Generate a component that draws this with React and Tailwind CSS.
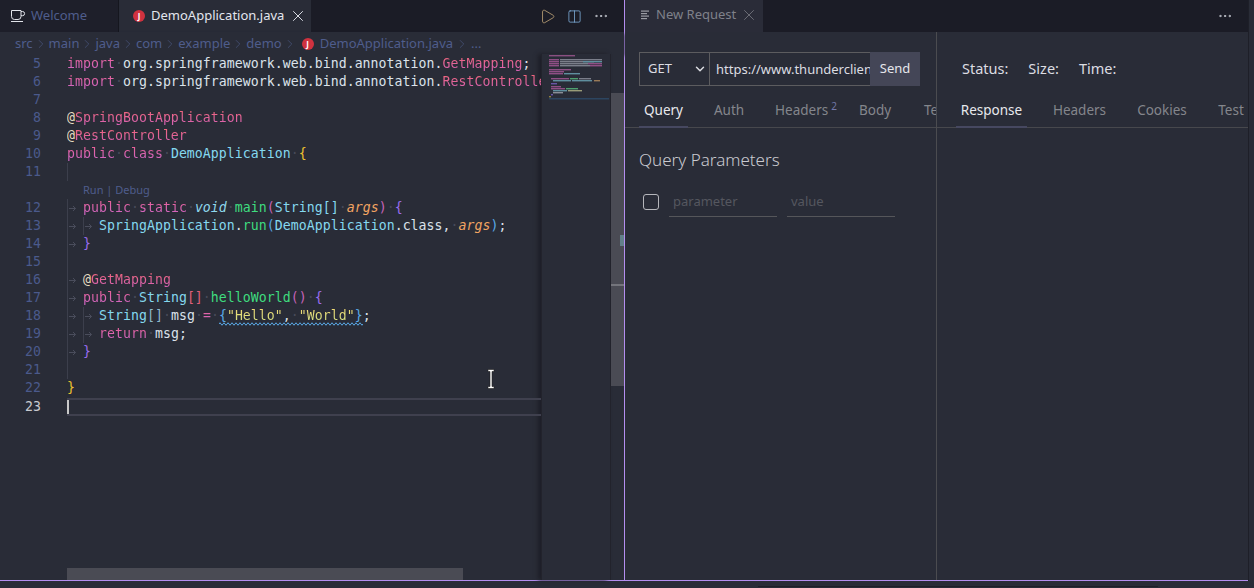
import { ChevronDown, ChevronRight, Columns2, Ellipsis, Play, X } from 'lucide-react';

// Token colours for the editor theme
const kw = 'bg-gradient-to-b from-[#f0608f] to-[#c765d0] bg-clip-text text-transparent';
const deco = 'bg-gradient-to-b from-[#f7656f] to-[#d05fc0] bg-clip-text text-transparent';
const type = 'text-[#84d8ef]';
const plain = 'text-[#dbe2ea]';
const fn = 'text-[#3fdc7f]';
const arg = 'italic text-[#f2a462]';
const voidKw = 'italic text-[#8fd8ee]';
const str = 'bg-gradient-to-b from-[#f5d76e] to-[#c9e58a] bg-clip-text text-transparent';
const gold = 'text-[#eec22f]';
const purple = 'text-[#9a6cf0]';
const pink = 'text-[#c763b8]';
const red = 'text-[#e05f7a]';
const blue = 'text-[#5aa9e6]';
const at = 'text-[#e6dcc0]';
const dot = 'text-[#474a59]';

const sp = ['·', dot];

const lines = [
  { n: 5, t: [['import', kw], sp, ['org.springframework.web.bind.annotation.', plain], ['GetMapping', deco], [';', plain]] },
  { n: 6, t: [['import', kw], sp, ['org.springframework.web.bind.annotation.', plain], ['RestController', deco], [';', plain]] },
  { n: 7, t: [] },
  { n: 8, t: [['@', at], ['SpringBootApplication', deco]] },
  { n: 9, t: [['@', at], ['RestController', deco]] },
  { n: 10, t: [['public', kw], sp, ['class', kw], sp, ['DemoApplication', type], sp, ['{', gold]] },
  { n: 11, guides: 1, t: [] },
  { lens: true },
  { n: 12, guides: 1, arrows: 1, t: [['public', kw], sp, ['static', kw], sp, ['void', voidKw], sp, ['main', fn], ['(', pink], ['String', type], ['[]', type], sp, ['args', arg], [')', pink], sp, ['{', purple]] },
  { n: 13, guides: 2, arrows: 2, t: [['SpringApplication', type], ['.', plain], ['run', fn], ['(', blue], ['DemoApplication', type], ['.class,', plain], sp, ['args', arg], [')', blue], [';', plain]] },
  { n: 14, guides: 1, arrows: 1, t: [['}', purple]] },
  { n: 15, guides: 1, t: [] },
  { n: 16, guides: 1, arrows: 1, t: [['@', at], ['GetMapping', deco]] },
  { n: 17, guides: 1, arrows: 1, t: [['public', kw], sp, ['String', type], ['[]', red], sp, ['helloWorld', fn], ['()', pink], sp, ['{', purple]] },
  { n: 18, guides: 2, arrows: 2, squiggle: true, t: [['String', type], ['[]', 'text-[#8fb8cc]'], sp, ['msg', plain], sp, ['=', kw], sp] },
  { n: 19, guides: 2, arrows: 2, t: [['return', kw], sp, ['msg', plain], [';', plain]] },
  { n: 20, guides: 1, arrows: 1, t: [['}', purple]] },
  { n: 21, guides: 1, t: [] },
  { n: 22, t: [['}', gold]] },
];

// x, y, width, colour of the tiny code marks in the minimap
const minimapMarks = [
  [7, 1, 26, '#8a4f80'],
  [7, 5, 10, '#8f4f85'], [18, 5, 42, '#7b7e8a'], [7, 7, 10, '#8f4f85'], [18, 7, 34, '#7b7e8a'], [41, 7, 19, '#5f8f9f'],
  [7, 9, 10, '#8f4f85'], [18, 9, 28, '#7b7e8a'], [46, 9, 14, '#8f4f85'], [7, 11, 10, '#8f4f85'], [18, 11, 30, '#7b7e8a'], [48, 11, 12, '#8f4f85'],
  [7, 15, 22, '#8f4f85'], [7, 17, 15, '#8f4f85'], [7, 19, 14, '#8f4f85'], [22, 19, 16, '#5f8f9f'],
  [9, 24, 18, '#8f4f85'], [28, 24, 8, '#4f9f6f'], [37, 24, 12, '#7b7e8a'], [11, 26, 18, '#5f8f9f'], [30, 26, 20, '#5f8f9f'], [52, 26, 6, '#9a7a58'],
  [9, 29, 6, '#6a55a8'], [9, 32, 10, '#8f4f85'], [9, 34, 14, '#8f4f85'], [24, 34, 12, '#4f9f6f'],
  [11, 36, 14, '#5f8f9f'], [26, 36, 14, '#9a9c78'], [11, 38, 10, '#8a8d96'], [9, 40, 2, '#6a55a8'], [7, 42, 2, '#8f8040'],
];

const JavaIcon = () => (
  <span className="flex h-3 w-3 shrink-0 items-center justify-center rounded-full bg-[#d0323f] text-[8px] font-bold leading-none text-white">
    J
  </span>
);

const CoffeeIcon = () => (
  <svg width="16" height="16" viewBox="0 0 16 16" fill="none" stroke="#e2e4ea" strokeWidth="1" className="shrink-0">
    <path d="M1.5 2.5h9.5v6a3 3 0 0 1-3 3H4.5a3 3 0 0 1-3-3z" />
    <path d="M11 3.5h1.5a1.6 1.6 0 0 1 0 4.2H11" />
    <path d="M1 13.5h12" />
  </svg>
);

// Rendered-whitespace arrow for a tab character
const TabArrow = () => (
  <svg width="9" height="9" viewBox="0 0 9 9" fill="none" stroke="#4a4d5c" strokeWidth="1" className="shrink-0">
    <path d="M1 4.5h6.5M5 2l2.5 2.5L5 7" />
  </svg>
);

// Wavy problem underline
const Squiggle = () => (
  <svg width="144" height="4" viewBox="0 0 144 4" fill="none" stroke="#5aa9e6" strokeWidth="1" className="absolute left-0 top-[15px]">
    <path d={`M0 2${' q1 -2.5 2 0 t2 0'.repeat(36)}`} />
  </svg>
);

const CodeLine = ({ line }) => {
  if (line.lens) {
    return (
      <div className="flex h-[18px] items-center pl-4 font-['Noto_Sans'] text-[11px] tracking-normal text-[#4f5d8c]">Run | Debug</div>
    );
  }
  const guides = line.guides || 0;
  const arrows = line.arrows || 0;
  return (
    <div className="flex h-[18px] items-center whitespace-pre">
      {Array.from({ length: guides }).map((_, i) => (
        <span key={i} className="flex h-full w-4 shrink-0 items-center border-l border-[#3c3f4c]">
          {i < arrows && <TabArrow />}
        </span>
      ))}
      {line.t.map(([text, cls], i) => (
        <span key={i} className={cls}>{text}</span>
      ))}
      {line.squiggle && (
        <>
          <span className={blue}>{'{'}</span>
          <span className={str}>"Hello"</span>
          <span className={plain}>,</span>
          <span className={dot}>·</span>
          <span className={str}>"World"</span>
          <span className={blue}>{'}'}</span>
          <span className={plain}>;</span>
        </>
      )}
    </div>
  );
};

const EditorPane = () => (
  <section className="flex w-[625px] shrink-0 flex-col border-r border-[#b48ef0]">
    <div className="flex h-8 shrink-0 items-center bg-[#1b1c26] text-[13px]">
      <div className="flex h-full w-[119px] items-center gap-[5px] border-r border-[#15161e] bg-[#1e1f2a] pl-[10px] text-[#4f5d8c]">
        <CoffeeIcon />
        Welcome
      </div>
      <div className="flex h-full w-[192px] items-center bg-[#292c37] pl-[14px] text-[#e3e6ee]">
        <JavaIcon />
        <span className="ml-1.5">DemoApplication.java</span>
        <X size={18} strokeWidth={1.25} className="ml-[5px]" />
      </div>
      <div className="ml-auto flex items-center gap-[11px] pr-[15px]">
        <Play size={17} strokeWidth={1.25} className="text-[#b39a72]" />
        <Columns2 size={15} strokeWidth={1.25} className="text-[#7fb0dc]" />
        <Ellipsis size={16} strokeWidth={1.5} className="text-[#c5c8d0]" />
      </div>
    </div>
    <div className="flex h-[22px] shrink-0 items-center bg-[#292c37] pl-[15px] pt-0.5 text-[13px] text-[#4f5d8c] shadow-[0_2px_3px_#1b1c26]">
      {['src', 'main', 'java', 'com', 'example', 'demo'].map((part) => (
        <span key={part} className="flex items-center">
          {part}
          <ChevronRight size={14} strokeWidth={1} className="mx-px" />
        </span>
      ))}
      <span className="ml-1"><JavaIcon /></span>
      <span className="ml-1.5">DemoApplication.java</span>
      <ChevronRight size={14} strokeWidth={1} className="mx-[2px]" />
      ...
    </div>
    <div className="flex min-h-0 flex-1 bg-[#292c37]">
      <div className="relative flex w-[541px] shrink-0 flex-col overflow-hidden">
        <div className="flex-1 pt-px font-['DejaVu_Sans_Mono'] text-[13.2px] tracking-[0.05px]">
          {lines.map((line, i) => (
            <div key={i} className="flex">
              <span className="h-[18px] w-[41px] shrink-0 text-right leading-[18px] text-[#4b5a8c]">{line.n}</span>
              <span className="ml-[26px] min-w-0 flex-1 overflow-hidden">
                <CodeLine line={line} />
              </span>
            </div>
          ))}
          <div className="mt-px flex">
            <span className="h-[18px] w-[41px] shrink-0 text-right leading-[18px] text-[#c8cad0]">23</span>
            <span className="ml-[26px] h-[18px] flex-1 border-y-2 border-[#3f404e]">
              <span className="block h-full w-0.5 bg-[#c8c8c8]" />
            </span>
          </div>
        </div>
        <div className="ml-[67px] h-3 w-[396px] shrink-0 bg-[#4a4b54]" />
        {/* Problem underline on line 18, sits over the code */}
        <div className="absolute left-[219px] top-[253px]">
          <Squiggle />
        </div>
        {/* Mouse text cursor */}
        <svg width="8" height="20" viewBox="0 0 8 20" className="absolute left-[487px] top-[315px]" fill="#fff" stroke="#222" strokeWidth="0.6">
          <path d="M1 0.5h6v2H5v15h2v2H1v-2h2v-15H1z" />
        </svg>
      </div>
      <div className="w-[69px] shrink-0 border-l border-[#22232c] bg-[#292c37] shadow-[-3px_0_4px_#1e1f28]">
        <svg width="68" height="50" viewBox="0 0 68 50">
          {minimapMarks.map(([x, y, w, c], i) => (
            <rect key={i} x={x} y={y} width={w} height="1.4" fill={c} />
          ))}
          <rect x="7" y="44" width="60" height="1.5" fill="#2c4560" />
        </svg>
      </div>
      <div className="relative w-[14px] shrink-0 border-l border-[#22232c]">
        <div className="mt-[39px] h-[293px] bg-[#4a4b54]" />
        <div className="absolute right-0 top-[181px] h-[11px] w-1 bg-[#62808a]" />
        <div className="absolute right-0 top-[230px] h-0.5 w-[13px] bg-[#74757c]" />
      </div>
    </div>
  </section>
);

const TabRow = ({ tabs, active, underlineCls }) => (
  <div className="flex h-[42px] shrink-0 border-b border-[#47484d] text-[13.5px] text-[#84868c]">
    {tabs.map((tab, i) => (
      <span
        key={tab.label}
        className={`-mb-px flex h-[42px] shrink-0 items-center justify-center whitespace-nowrap border-b-2 pt-2 ${tab.w} ${tab.mr} ${i === active ? underlineCls : 'border-transparent'}`}
      >
        {tab.label}
        {tab.sup && <sup className="ml-[3px] mt-0.5 text-[10px] text-[#7378a8]">{tab.sup}</sup>}
      </span>
    ))}
  </div>
);

const RequestPane = () => (
  <section className="flex min-w-0 flex-1 flex-col bg-[#292c37] font-['Noto_Sans']">
    <div className="flex h-8 shrink-0 items-center bg-[#1b1c26] text-[13px]">
      <div className="flex h-full w-[139px] items-center border-r border-[#1b1c26] bg-[#2a2c38] pb-0.5 pl-4 text-[#7f818a]">
        <svg width="9" height="10" viewBox="0 0 9 10" fill="#9a9ca4" className="shrink-0">
          <rect x="0" y="0.5" width="8" height="1.2" />
          <rect x="0" y="3" width="6" height="1.2" />
          <rect x="0" y="5.5" width="8" height="1.2" />
          <rect x="0" y="8" width="6" height="1.2" />
        </svg>
        <span className="ml-1.5">New Request</span>
        <X size={18} strokeWidth={0.9} className="ml-1 text-[#8a8c94]" />
      </div>
      <Ellipsis size={16} strokeWidth={1.5} className="ml-auto mr-[15px] text-[#c5c8d0]" />
    </div>
    <div className="flex min-h-0 flex-1">
      <div className="flex w-[312px] shrink-0 flex-col overflow-hidden border-r border-[#4b4c50]">
        <div className="flex h-[54px] shrink-0 items-start pl-[14px] pt-5 text-[13px] text-[#dcdde2]">
          <div className="flex h-[34px] w-[71px] items-center justify-between border border-[#5c5c5f] pl-2 pr-[2px]">
            GET
            <ChevronDown size={14} strokeWidth={2.5} />
          </div>
          <input
            readOnly
            value="https://www.thunderclient.com/welcome"
            className="h-[34px] w-[160px] border-y border-[#5c5c5f] bg-transparent pl-[6px] outline-none"
          />
          <div className="flex h-[34px] w-[50px] items-center justify-center bg-[#444657] text-[#e6e7ec]">Send</div>
        </div>
        <TabRow
          active={0}
          underlineCls="border-[#464860] text-[#e8e9ed]"
          tabs={[
            { label: 'Query', w: 'w-[49px]', mr: 'ml-[14px] mr-[26px]' },
            { label: 'Auth', w: 'w-[30px]', mr: 'mr-[31px]' },
            { label: 'Headers', sup: '2', w: 'w-[62px]', mr: 'mr-[22px]' },
            { label: 'Body', w: 'w-[32px]', mr: 'mr-[32px]' },
            { label: 'Tests', w: 'w-[34px]', mr: '' },
          ]}
        />
        <h2 className="ml-[14px] mt-[18px] text-[17px] font-light leading-7 text-[#c9cad0]">Query Parameters</h2>
        <div className="ml-[18px] mt-[13px] flex items-center text-[13px] text-[#55575f]">
          <span className="h-4 w-4 shrink-0 rounded-[3px] border border-[#b5b6bb]" />
          <span className="ml-2.5 h-[30px] w-[108px] border-b border-[#55565a] pl-1 leading-[28px]">parameter</span>
          <span className="ml-2.5 h-[30px] w-[108px] border-b border-[#55565a] pl-1 leading-[28px]">value</span>
        </div>
      </div>
      <div className="flex min-w-0 flex-1 flex-col overflow-hidden">
        <div className="flex h-[54px] shrink-0 items-start gap-5 pl-[25px] pt-[26px] text-[14.5px] leading-5 text-[#dcdde2]">
          <span>Status:</span>
          <span>Size:</span>
          <span>Time:</span>
        </div>
        <TabRow
          active={0}
          underlineCls="border-[#464860] text-[#e8e9ed]"
          tabs={[
            { label: 'Response', w: 'w-[71px]', mr: 'ml-[19px] mr-[26px]' },
            { label: 'Headers', w: 'w-[53px]', mr: 'mr-[31px]' },
            { label: 'Cookies', w: 'w-[50px]', mr: 'mr-[31px]' },
            { label: 'Test', w: 'w-[26px]', mr: '' },
          ]}
        />
      </div>
    </div>
  </section>
);

export default function App() {
  return (
    <div className="flex h-[588px] w-[1254px] flex-col overflow-hidden bg-[#292c37] font-['Noto_Sans']">
      <div className="flex h-[581px] shrink-0">
        <div className="flex w-[1248px] shrink-0 border-b border-[#b48ef0]">
          <EditorPane />
          <RequestPane />
        </div>
        <div className="flex-1 border-l border-[#1e1f28]" />
      </div>
      <div className="ml-[758px] mt-[5px] w-[400px] border-t border-[#1e1f28]" />
    </div>
  );
}
